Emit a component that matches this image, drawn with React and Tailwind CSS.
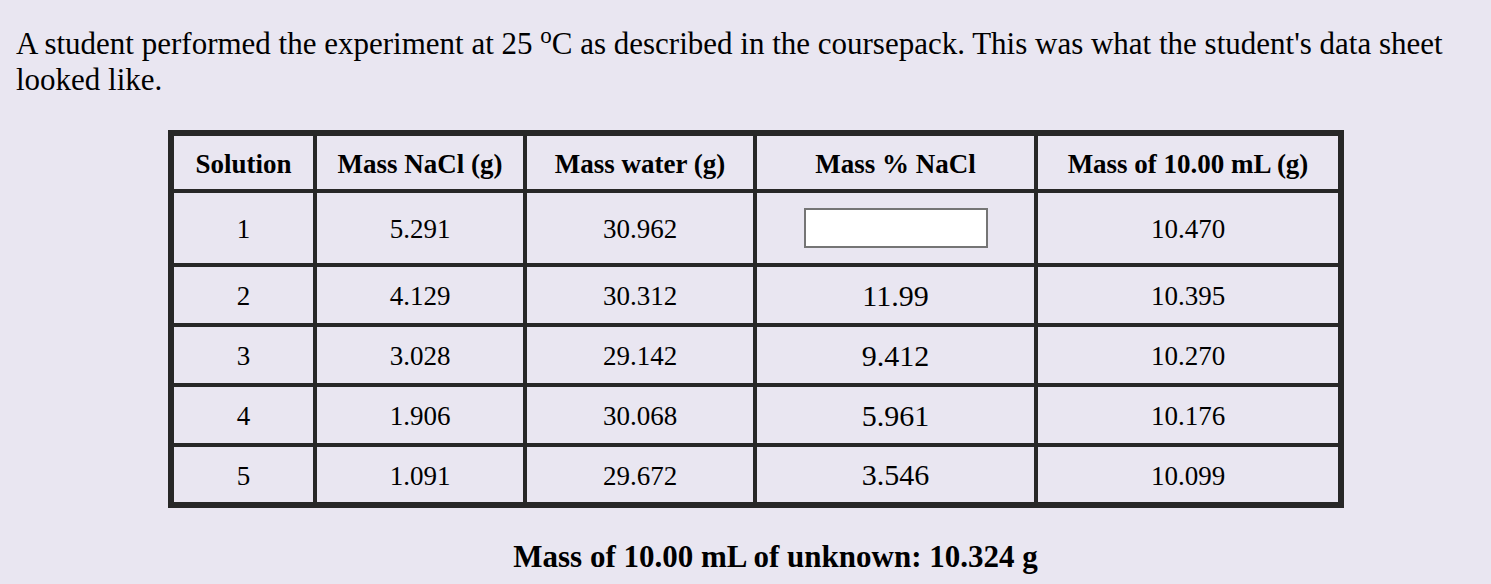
const rows = [
	{ n: "1", nacl: "5.291", water: "30.962", pct: null, mass: "10.470" },
	{ n: "2", nacl: "4.129", water: "30.312", pct: "11.99", mass: "10.395" },
	{ n: "3", nacl: "3.028", water: "29.142", pct: "9.412", mass: "10.270" },
	{ n: "4", nacl: "1.906", water: "30.068", pct: "5.961", mass: "10.176" },
	{ n: "5", nacl: "1.091", water: "29.672", pct: "3.546", mass: "10.099" },
];

const cell = "border-4 border-[#272727] text-center align-middle pt-[3px]";

export default function App() {
	return (
		<div className="min-h-[584px] bg-[#e9e6f1] text-black font-['Liberation_Serif',serif] pt-[26px]">
			<p className="px-4 text-[31px] leading-[36px]">
				A student performed the experiment at 25 <sup className="text-[23px] leading-none">o</sup>C as described in
				the coursepack. This was what the student's data sheet looked like.
			</p>

			<table className="mt-[32px] ml-[168px] w-[1170px] table-fixed border-collapse border-[6px] border-[#272727] text-[27px]">
				<colgroup>
					<col className="w-[144px]" />
					<col className="w-[210px]" />
					<col className="w-[230px]" />
					<col className="w-[281px]" />
					<col className="w-[305px]" />
				</colgroup>
				<thead>
					<tr className="h-[58px] font-bold">
						<th className={cell}>Solution</th>
						<th className={cell}>Mass NaCl (g)</th>
						<th className={cell}>Mass water (g)</th>
						<th className={cell}>Mass % NaCl</th>
						<th className={cell}>Mass of 10.00 mL (g)</th>
					</tr>
				</thead>
				<tbody>
					{rows.map((r) => (
						<tr key={r.n} className={r.pct ? "h-[60px]" : "h-[74px]"}>
							<td className={cell}>{r.n}</td>
							<td className={cell}>{r.nacl}</td>
							<td className={cell}>{r.water}</td>
							<td className="border-4 border-[#272727] text-center align-middle text-[30px]">
								{r.pct ?? (
									<input
										type="text"
										className="block mx-auto w-[184px] h-[40px] bg-white border-2 border-[#757575]"
									/>
								)}
							</td>
							<td className={cell}>{r.mass}</td>
						</tr>
					))}
				</tbody>
			</table>

			<div className="pl-[60px] mt-[31px] text-center font-bold text-[31px] leading-[36px]">
				Mass of 10.00 mL of unknown: 10.324 g
			</div>
		</div>
	);
}
